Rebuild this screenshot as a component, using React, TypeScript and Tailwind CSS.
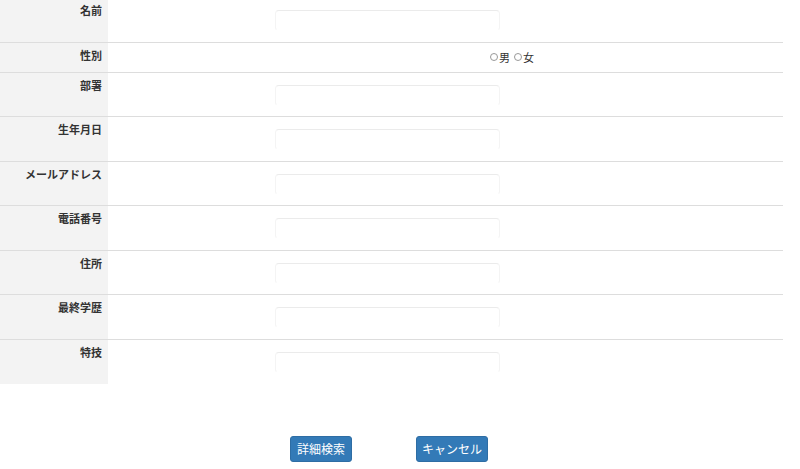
import React from 'react'

const fields = [
  { label: '名前', kind: 'input' },
  { label: '性別', kind: 'radio' },
  { label: '部署', kind: 'input' },
  { label: '生年月日', kind: 'input' },
  { label: 'メールアドレス', kind: 'input' },
  { label: '電話番号', kind: 'input' },
  { label: '住所', kind: 'input' },
  { label: '最終学歴', kind: 'input' },
  { label: '特技', kind: 'input' },
]

function TextBox() {
  return (
    <div className="ml-[167px] mt-[12px] h-[21px] w-[225px] rounded-[4px] border border-x-[#f4f4f4] border-t-[#ebebeb] border-b-transparent bg-white" />
  )
}

function Gender() {
  return (
    <div className="flex h-full items-center pl-[382px] text-[11px] leading-none text-[#333]">
      <span className="mr-[1px] inline-block h-[8px] w-[8px] rounded-full border border-[#999]" />
      <span>男</span>
      <span className="ml-[4px] mr-[1px] inline-block h-[8px] w-[8px] rounded-full border border-[#999]" />
      <span>女</span>
    </div>
  )
}

export default function App() {
  return (
    <div
      className="min-h-screen w-[800px] overflow-hidden bg-white"
      style={{ fontFamily: '"Noto Sans CJK JP", "Noto Sans", sans-serif' }}
    >
      <div className="-mt-[2px] w-[783px]">
        {fields.map((f, i) => (
          <div
            key={f.label}
            className={`flex ${f.kind === 'radio' ? 'h-[30px]' : 'h-[44.5px]'} ${
              i < fields.length - 1 ? 'border-b border-[#dddddd]' : ''
            }`}
          >
            <div className="w-[108px] shrink-0 bg-[#f3f3f3] pr-[6px] pt-[4px] text-right text-[11px] font-bold leading-[16px] text-[#333]">
              {f.label}
            </div>
            <div className="flex-1">
              {f.kind === 'input' ? <TextBox /> : <Gender />}
            </div>
          </div>
        ))}
      </div>

      {/* Buttons */}
      <div className="mt-[52px] flex gap-[64px] pl-[290px]">
        <button className="h-[26px] w-[62px] rounded-[3px] border border-[#2e6da4] bg-[#337ab7] text-[12px] text-white">
          詳細検索
        </button>
        <button className="h-[26px] w-[72px] rounded-[3px] border border-[#2e6da4] bg-[#337ab7] text-[12px] text-white">
          キャンセル
        </button>
      </div>
    </div>
  )
}
